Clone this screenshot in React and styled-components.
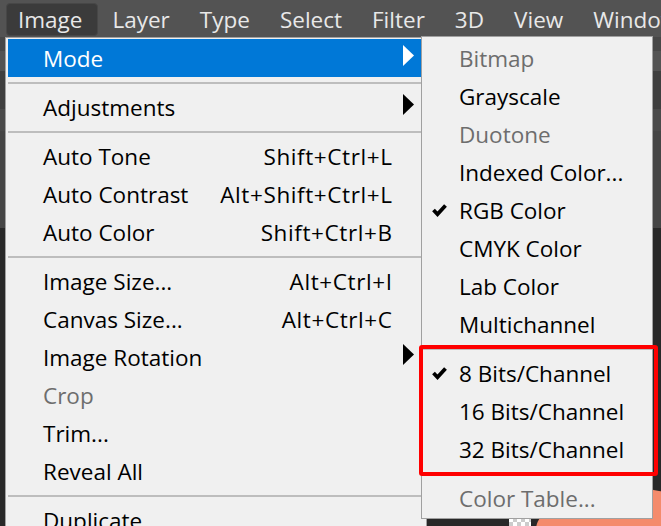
import React from 'react';
import styled, { createGlobalStyle } from 'styled-components';

const GlobalStyle = createGlobalStyle`
  html, body {
    margin: 0;
    padding: 0;
  }
  body {
    width: 661px;
    height: 526px;
    overflow: hidden;
    background: #282828;
    font-family: "Open Sans", "Noto Sans", sans-serif;
  }
`;

const Screen = styled.div`
  position: relative;
  width: 661px;
  height: 526px;
  overflow: hidden;
  display: flex;
  flex-direction: column;
  background: #282828;
`;

const MenuBar = styled.div`
  display: flex;
  align-items: flex-start;
  height: 37px;
  padding: 3px 0 0 6px;
  box-sizing: border-box;
  background: #535353;
  flex-shrink: 0;
`;

const MenuBarItem = styled.div`
  height: 33px;
  padding: 0 15px 0 ${p => (p.$active ? 11 : 13)}px;
  display: flex;
  align-items: center;
  box-sizing: border-box;
  font-size: 22.5px;
  color: #e8e8e8;
  white-space: nowrap;
  border: 1px solid ${p => (p.$active ? '#474747' : 'transparent')};
  border-radius: 4px;
  background: ${p => (p.$active ? '#3b3b3b' : 'transparent')};
`;

const Band = styled.div`
  height: ${p => p.$h}px;
  background: ${p => p.$bg};
  flex-shrink: 0;
`;

const CanvasArea = styled.div`
  flex: 1;
  background: #282828;
  display: flex;
  flex-direction: column;
  justify-content: flex-end;
`;

const Document = styled.div`
  margin-left: 509px;
  height: 56px;
  display: flex;
`;

const Checker = styled.div`
  width: 22px;
  background-color: #fff;
  background-image:
    linear-gradient(45deg, #cccccc 25%, transparent 25%, transparent 75%, #cccccc 75%),
    linear-gradient(45deg, #cccccc 25%, transparent 25%, transparent 75%, #cccccc 75%);
  background-size: 8px 8px;
  background-position: 0 0, 4px 4px;
`;

const Photo = styled.div`
  flex: 1;
  background: #282828;
  svg { display: block; }
`;

const Dropdown = styled.div`
  position: absolute;
  top: 37px;
  left: 5px;
  width: 422px;
  height: 510px;
  box-sizing: border-box;
  padding: 1px 2px;
  background: #f0f0f0;
  border: 1px solid #a0a0a0;
  font-size: 22.5px;
`;

const Submenu = styled.div`
  position: absolute;
  top: 36px;
  left: 421px;
  width: 232px;
  box-sizing: border-box;
  padding: 2px 0 1px;
  background: #f0f0f0;
  border: 1px solid #a0a0a0;
  font-size: 22.5px;
`;

const Row = styled.div`
  display: flex;
  align-items: center;
  height: 38px;
  padding-left: 35px;
  color: ${p => (p.$highlight ? '#ffffff' : p.$disabled ? '#6d6d6d' : '#000000')};
  background: ${p => (p.$highlight ? '#0078d7' : 'transparent')};
  white-space: nowrap;
`;

const SubRow = styled.div`
  display: flex;
  align-items: center;
  height: 38px;
  color: ${p => (p.$disabled ? '#6d6d6d' : '#000000')};
  white-space: nowrap;
`;

const Label = styled.span`
  flex: 1;
  padding-top: 1px;
`;

const Shortcut = styled.span`
  padding-top: 1px;
  letter-spacing: 0.6px;
  margin-right: -0.6px;
`;

const ArrowCell = styled.div`
  width: 32px;
  padding-left: 11px;
  box-sizing: border-box;
  display: flex;
  align-items: center;
  margin-top: -5px;
  svg { display: block; }
`;

const CheckCell = styled.div`
  width: 37px;
  padding-left: 10px;
  box-sizing: border-box;
  display: flex;
  align-items: center;
  svg { display: block; }
`;

const Separator = styled.div`
  height: 2px;
  margin: 5px 0 4px;
  background: #bdbdbd;
`;

const Callout = styled.div`
  position: absolute;
  left: 419px;
  top: 345px;
  width: 239px;
  height: 131px;
  box-sizing: border-box;
  border: 4px solid #ff0000;
  border-radius: 3px;
  pointer-events: none;
`;

function Arrow({ color }) {
  return (
    <svg width="11" height="21" viewBox="0 0 11 21">
      <polygon points="0,0 11,10.5 0,21" fill={color} />
    </svg>
  );
}

function Check() {
  return (
    <svg width="15" height="13" viewBox="0 0 15 13">
      <polyline points="1.5,6 5.5,10.2 13.5,1.5" fill="none" stroke="#000" strokeWidth="3.8" strokeLinejoin="miter" />
    </svg>
  );
}

const barItems = ['Image', 'Layer', 'Type', 'Select', 'Filter', '3D', 'View', 'Window'];

const mainMenu = [
  { label: 'Mode', arrow: true, highlight: true },
  'sep',
  { label: 'Adjustments', arrow: true },
  'sep',
  { label: 'Auto Tone', shortcut: 'Shift+Ctrl+L' },
  { label: 'Auto Contrast', shortcut: 'Alt+Shift+Ctrl+L' },
  { label: 'Auto Color', shortcut: 'Shift+Ctrl+B' },
  'sep',
  { label: 'Image Size...', shortcut: 'Alt+Ctrl+I' },
  { label: 'Canvas Size...', shortcut: 'Alt+Ctrl+C' },
  { label: 'Image Rotation', arrow: true },
  { label: 'Crop', disabled: true },
  { label: 'Trim...' },
  { label: 'Reveal All' },
  'sep',
  { label: 'Duplicate...' },
];

const modeMenu = [
  { label: 'Bitmap', disabled: true },
  { label: 'Grayscale' },
  { label: 'Duotone', disabled: true },
  { label: 'Indexed Color...' },
  { label: 'RGB Color', checked: true },
  { label: 'CMYK Color' },
  { label: 'Lab Color' },
  { label: 'Multichannel' },
  'sep',
  { label: '8 Bits/Channel', checked: true },
  { label: '16 Bits/Channel' },
  { label: '32 Bits/Channel' },
  'sep',
  { label: 'Color Table...', disabled: true },
];

export default function App() {
  return (
    <>
      <GlobalStyle />
      <Screen>
        <MenuBar>
          {barItems.map((name, i) => (
            <MenuBarItem key={name} $active={i === 0}>{name}</MenuBarItem>
          ))}
        </MenuBar>
        <Band $h={14} $bg="#474747" />
        <Band $h={20} $bg="#535353" />
        <Band $h={38} $bg="#3f3f3f" />
        <Band $h={22} $bg="#4a4a4a" />
        <Band $h={97} $bg="#454545" />
        <CanvasArea>
          <Document>
            <Checker />
            <Photo>
              <svg width="130" height="56" viewBox="0 0 130 56">
                <ellipse cx="95" cy="60" rx="90" ry="42" fill="#f48b6c" />
              </svg>
            </Photo>
          </Document>
        </CanvasArea>

        <Dropdown>
          {mainMenu.map((item, i) =>
            item === 'sep' ? (
              <Separator key={i} />
            ) : (
              <Row key={i} $highlight={item.highlight} $disabled={item.disabled}>
                <Label>{item.label}</Label>
                {item.shortcut && <Shortcut>{item.shortcut}</Shortcut>}
                <ArrowCell>
                  {item.arrow && <Arrow color={item.highlight ? '#ffffff' : '#000000'} />}
                </ArrowCell>
              </Row>
            )
          )}
        </Dropdown>

        <Submenu>
          {modeMenu.map((item, i) =>
            item === 'sep' ? (
              <Separator key={i} />
            ) : (
              <SubRow key={i} $disabled={item.disabled}>
                <CheckCell>{item.checked && <Check />}</CheckCell>
                <Label>{item.label}</Label>
              </SubRow>
            )
          )}
        </Submenu>

        <Callout />
      </Screen>
    </>
  );
}
